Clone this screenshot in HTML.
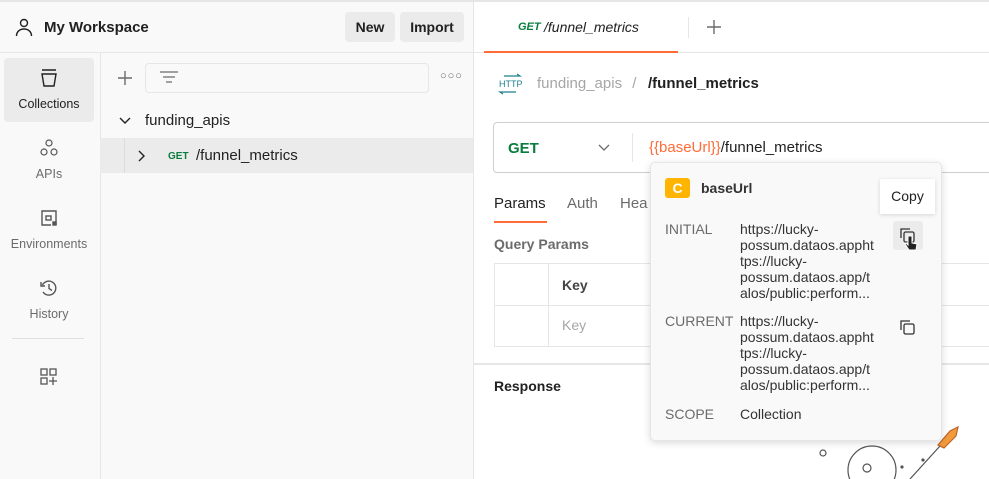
<!DOCTYPE html>
<html><head><meta charset="utf-8"><style>
*{box-sizing:border-box;margin:0;padding:0}
body{width:989px;height:479px;overflow:hidden;font-family:"Liberation Sans",sans-serif;background:#fff;position:relative;color:#212121}
.a{position:absolute}
</style></head><body>
<div class="a" style="left:0;top:0;width:474px;height:479px;background:#f9f9f9"></div>
<div class="a" style="left:0;top:0;width:989px;height:2px;background:#e6e6e6"></div>
<div class="a" style="left:0;top:52px;width:474px;height:1px;background:#e6e6e6"></div>
<div class="a" style="left:474px;top:52px;width:515px;height:1px;background:#e6e6e6"></div>
<div class="a" style="left:100px;top:53px;width:1px;height:426px;background:#e6e6e6"></div>
<div class="a" style="left:473px;top:0;width:1px;height:479px;background:#e6e6e6"></div>
<!-- header -->
<svg class="a" style="left:14px;top:17px" width="20" height="20" viewBox="0 0 20 20" fill="none" stroke="#212121" stroke-width="1.4"><circle cx="10" cy="6" r="3.5"/><path d="M2.5 19c0-4.5 3.5-7 7.5-7s7.5 2.5 7.5 7"/></svg>
<div class="a" style="left:44px;top:19px;font-size:15px;font-weight:bold">My Workspace</div>
<div class="a" style="left:345px;top:12px;width:50px;height:30px;background:#ebebeb;border-radius:4px;font-size:14px;font-weight:bold;text-align:center;line-height:30px">New</div>
<div class="a" style="left:400px;top:12px;width:64px;height:30px;background:#ebebeb;border-radius:4px;font-size:14px;font-weight:bold;text-align:center;line-height:30px">Import</div>
<!-- sidebar -->
<div class="a" style="left:4px;top:58px;width:90px;height:64px;background:#ebebeb;border-radius:4px"></div>
<svg class="a" style="left:39px;top:68px" width="20" height="20" viewBox="0 0 20 20" fill="none" stroke="#212121" stroke-width="1.4"><path d="M3 2h14M3 6h14l-2 12H5z"/></svg>
<div class="a" style="left:4px;top:97px;width:90px;text-align:center;font-size:12.5px;color:#212121">Collections</div>
<svg class="a" style="left:38px;top:138px" width="22" height="20" viewBox="0 0 22 20" fill="none" stroke="#555" stroke-width="1.2"><circle cx="11" cy="5" r="3"/><circle cx="6" cy="14" r="3"/><circle cx="16" cy="14" r="3"/></svg>
<div class="a" style="left:4px;top:167px;width:90px;text-align:center;font-size:12.5px;color:#6b6b6b">APIs</div>
<svg class="a" style="left:39px;top:208px" width="20" height="20" viewBox="0 0 20 20" fill="none" stroke="#555" stroke-width="1.4"><path d="M17 17V3H3v14h9"/><rect x="7" y="8" width="5" height="4"/><rect x="14" y="14" width="3" height="3" fill="#555"/></svg>
<div class="a" style="left:4px;top:237px;width:90px;text-align:center;font-size:12.5px;color:#6b6b6b">Environments</div>
<svg class="a" style="left:39px;top:278px" width="20" height="20" viewBox="0 0 20 20" fill="none" stroke="#555" stroke-width="1.4"><path d="M3.5 7A7 7 0 1 1 4 14M2 4v4h4M10 6v4.5l3 2"/></svg>
<div class="a" style="left:4px;top:307px;width:90px;text-align:center;font-size:12.5px;color:#6b6b6b">History</div>
<div class="a" style="left:12px;top:338px;width:72px;height:1px;background:#e0e0e0"></div>
<svg class="a" style="left:39px;top:367px" width="20" height="20" viewBox="0 0 20 20" fill="none" stroke="#555" stroke-width="1.3"><rect x="2" y="2" width="6" height="6"/><rect x="11" y="2" width="6" height="6"/><rect x="2" y="11" width="6" height="6"/><path d="M14 10v8M10 14h8"/></svg>
<!-- middle -->
<svg class="a" style="left:116px;top:69px" width="18" height="18" viewBox="0 0 18 18" stroke="#6b6b6b" stroke-width="1.4"><path d="M9 2v14M2 9h14"/></svg>
<div class="a" style="left:145px;top:63px;width:284px;height:30px;border:1px solid #e6e6e6;border-radius:4px;background:#f9f9f9"></div>
<svg class="a" style="left:159px;top:70px" width="20" height="16" viewBox="0 0 20 16" stroke="#6b6b6b" stroke-width="1.3"><path d="M1 2h18M4 7h12M7 12h6"/></svg>
<div class="a" style="left:440px;top:70px;font-size:11px;color:#6b6b6b;letter-spacing:1px">○○○</div>
<svg class="a" style="left:118px;top:113px" width="14" height="14" viewBox="0 0 14 14" fill="none" stroke="#212121" stroke-width="1.4"><path d="M2 5l5 5 5-5"/></svg>
<div class="a" style="left:145px;top:112px;font-size:15px">funding_apis</div>
<div class="a" style="left:100px;top:138px;width:373px;height:35px;background:#ebebeb"></div>
<div class="a" style="left:124px;top:138px;width:1px;height:35px;background:#dcdcdc"></div>
<svg class="a" style="left:134px;top:149px" width="14" height="14" viewBox="0 0 14 14" fill="none" stroke="#212121" stroke-width="1.4"><path d="M5 2l5 5-5 5"/></svg>
<div class="a" style="left:168px;top:151px;font-size:10px;font-weight:bold;color:#0a7d3e">GET</div>
<div class="a" style="left:196px;top:147px;font-size:15px">/funnel_metrics</div>
<!-- tab bar -->
<div class="a" style="left:518px;top:21px;font-size:11px;font-weight:bold;font-style:italic;color:#0a7d3e">GET</div>
<div class="a" style="left:544px;top:19px;font-size:14px;font-style:italic">/funnel_metrics</div>
<div class="a" style="left:484px;top:51px;width:194px;height:2px;background:#ff6c37"></div>
<div class="a" style="left:688px;top:17px;width:1px;height:21px;background:#e6e6e6"></div>
<svg class="a" style="left:705px;top:18px" width="18" height="18" viewBox="0 0 18 18" stroke="#6b6b6b" stroke-width="1.4"><path d="M9 2v14M2 9h14"/></svg>
<!-- breadcrumb -->
<svg class="a" style="left:498px;top:73px" width="24" height="22" viewBox="0 0 24 22" fill="none" stroke="#1d7f8c" stroke-width="1.2"><path d="M6 3h16l-3-2M18 19H2l3 2"/><text x="1" y="14" font-size="9" fill="#1d7f8c" stroke="none" font-family="Liberation Sans">HTTP</text></svg>
<div class="a" style="left:537px;top:75px;font-size:15px;color:#a6a6a6">funding_apis <span style="margin:0 6px">/</span></div>
<div class="a" style="left:648px;top:75px;font-size:15px;font-weight:bold">/funnel_metrics</div>
<!-- url bar -->
<div class="a" style="left:493px;top:122px;width:510px;height:51px;border:1px solid #cfcfcf;border-radius:4px"></div>
<div class="a" style="left:508px;top:140px;font-size:15px;font-weight:bold;color:#0a7d3e">GET</div>
<svg class="a" style="left:597px;top:143px" width="14" height="10" viewBox="0 0 14 10" fill="none" stroke="#6b6b6b" stroke-width="1.3"><path d="M2 2l5 5 5-5"/></svg>
<div class="a" style="left:632px;top:133px;width:1px;height:29px;background:#e6e6e6"></div>
<div class="a" style="left:649px;top:139px;font-size:15px"><span style="color:#ff6c37">{{baseUrl}}</span>/funnel_metrics</div>
<!-- params -->
<div class="a" style="left:494px;top:195px;font-size:15px">Params</div>
<div class="a" style="left:567px;top:195px;font-size:15px;color:#6b6b6b">Auth</div>
<div class="a" style="left:620px;top:195px;font-size:15px;color:#6b6b6b">Hea</div>
<div class="a" style="left:494px;top:221px;width:53px;height:2px;background:#ff6c37"></div>
<div class="a" style="left:494px;top:236px;font-size:14px;font-weight:bold;color:#6b6b6b">Query Params</div>
<div class="a" style="left:494px;top:263px;width:500px;height:84px;border:1px solid #e6e6e6"></div>
<div class="a" style="left:548px;top:263px;width:1px;height:84px;background:#e6e6e6"></div>
<div class="a" style="left:494px;top:305px;width:500px;height:1px;background:#e6e6e6"></div>
<div class="a" style="left:562px;top:277px;font-size:14px;font-weight:bold;color:#444">Key</div>
<div class="a" style="left:562px;top:317px;font-size:14px;color:#a6a6a6">Key</div>
<div class="a" style="left:474px;top:363px;width:515px;height:2px;background:#e6e6e6"></div>
<div class="a" style="left:494px;top:378px;font-size:14px;font-weight:bold">Response</div>
<!-- rocket illustration -->
<svg class="a" style="left:810px;top:425px" width="179" height="54" viewBox="0 0 179 54" fill="none" stroke="#555" stroke-width="1.2"><circle cx="13" cy="28" r="3"/><circle cx="62" cy="45" r="24"/><circle cx="57" cy="43" r="4"/><path d="M100 54l40-44"/><path d="M128 20l12-14 8-4-2 9-12 12z" fill="#f29b3c" stroke="#c0632a"/><circle cx="92" cy="42" r="1" fill="#555"/><circle cx="113" cy="35" r="1" fill="#555"/></svg>
<!-- popup -->
<div class="a" style="left:650px;top:162px;width:292px;height:279px;background:#f9f9f9;border:1px solid #e6e6e6;border-radius:5px;box-shadow:0 2px 8px rgba(0,0,0,.15)"></div>
<div class="a" style="left:665px;top:178px;width:25px;height:20px;background:#ffb400;border-radius:3px;color:#fff;font-weight:bold;font-size:14px;text-align:center;line-height:20px">C</div>
<div class="a" style="left:701px;top:180px;font-size:14px;font-weight:bold;color:#333">baseUrl</div>
<div class="a" style="left:880px;top:179px;width:55px;height:35px;background:#fff;box-shadow:0 1px 4px rgba(0,0,0,.15);font-size:14px;text-align:center;line-height:35px">Copy</div>
<div class="a" style="left:665px;top:221px;font-size:14px;color:#6b6b6b">INITIAL</div>
<div class="a" style="left:740px;top:221px;width:145px;font-size:14px;line-height:16px;color:#333">https://lucky-<br>possum.dataos.appht<br>tps://lucky-<br>possum.dataos.app/t<br>alos/public:perform...</div>
<div class="a" style="left:893px;top:221px;width:30px;height:29px;background:#ebebeb;border-radius:3px"></div>
<svg class="a" style="left:898px;top:226px" width="20" height="20" viewBox="0 0 20 20" fill="none" stroke="#333" stroke-width="1.3"><path d="M3 12V3h9"/><rect x="6" y="6" width="10" height="10" rx="1.5"/></svg>
<svg class="a" style="left:904px;top:234px" width="14" height="18" viewBox="0 0 14 18"><path d="M4 2v9l-2-2-1 1 4 6h7l1-6-5-1V2z" fill="#222" stroke="#fff" stroke-width="1"/></svg>
<div class="a" style="left:665px;top:313px;font-size:14px;color:#6b6b6b">CURRENT</div>
<div class="a" style="left:740px;top:313px;width:145px;font-size:14px;line-height:16px;color:#333">https://lucky-<br>possum.dataos.appht<br>tps://lucky-<br>possum.dataos.app/t<br>alos/public:perform...</div>
<svg class="a" style="left:898px;top:318px" width="20" height="20" viewBox="0 0 20 20" fill="none" stroke="#333" stroke-width="1.3"><path d="M3 12V3h9"/><rect x="6" y="6" width="10" height="10" rx="1.5"/></svg>
<div class="a" style="left:665px;top:406px;font-size:14px;color:#6b6b6b">SCOPE</div>
<div class="a" style="left:740px;top:406px;font-size:14px;color:#333">Collection</div>
</body></html>
